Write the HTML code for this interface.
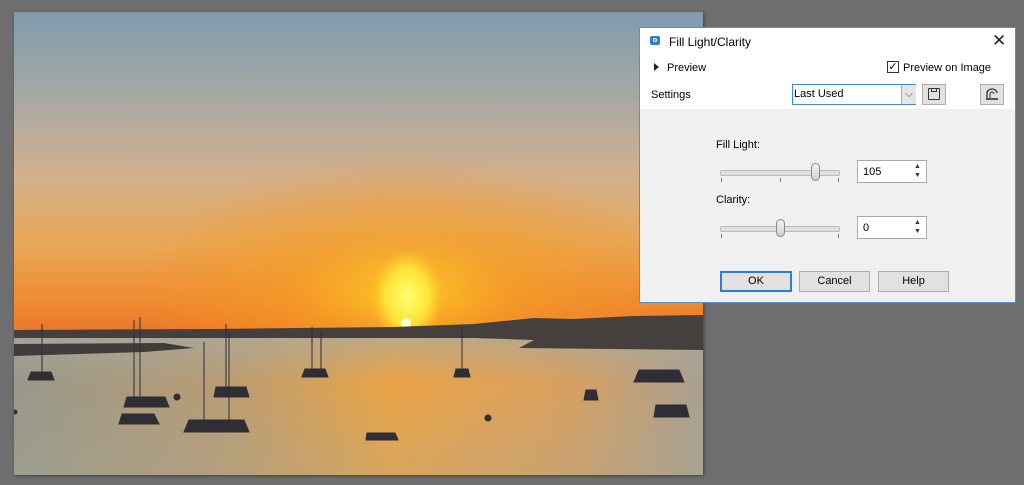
<!DOCTYPE html>
<html><head><style>
body{margin:0;width:1024px;height:485px;background:#6e6e6e;position:relative;overflow:hidden;font-family:"Liberation Sans",sans-serif;font-size:11px;color:#000}
.a{position:absolute}
#photo{left:14px;top:12px;width:689px;height:463px;overflow:hidden;box-shadow:1px 1px 3px rgba(0,0,0,.4)}
.btn{position:absolute;background:#e1e1e1;border:1px solid #adadad;text-align:center;line-height:18px;box-sizing:border-box}
.track{position:absolute;height:4px;background:#e0e0e0;border:1px solid #b8b8b8;border-radius:2px}
.thumb{position:absolute;width:9px;height:18px;background:linear-gradient(#f4f4f4,#cfcfcf);border:1px solid #8a8a8a;border-radius:5px;box-sizing:border-box}
.tick{position:absolute;width:1px;height:4px;background:#777}
.spin{position:absolute;background:#fff;border:1px solid #aaa;box-sizing:border-box}
</style></head><body>
<div id="photo" class="a">
<svg width="689" height="463" viewBox="0 0 689 463">
<defs>
<linearGradient id="sky" x1="0" y1="0" x2="0" y2="1">
<stop offset="0" stop-color="#7f9bae"/><stop offset=".25" stop-color="#a6a8a4"/><stop offset=".5" stop-color="#d2b08c"/><stop offset=".7" stop-color="#e8a858"/><stop offset=".88" stop-color="#f08a30"/><stop offset="1" stop-color="#e8702a"/></linearGradient>
<radialGradient id="sun" cx="392" cy="280" r="170" gradientUnits="userSpaceOnUse" gradientTransform="translate(392 280) scale(1.6 .8) translate(-392 -280)">
<stop offset="0" stop-color="#ffd020" stop-opacity=".9"/><stop offset=".4" stop-color="#f8a020" stop-opacity=".6"/><stop offset="1" stop-color="#f59020" stop-opacity="0"/></radialGradient>
<radialGradient id="core" cx=".5" cy=".5" r=".5"><stop offset="0" stop-color="#ffff70"/><stop offset=".6" stop-color="#ffee40" stop-opacity=".8"/><stop offset="1" stop-color="#ffcc30" stop-opacity="0"/></radialGradient>
<linearGradient id="water" x1="0" y1="0" x2="1" y2="0">
<stop offset="0" stop-color="#98988a"/><stop offset=".3" stop-color="#b89c74"/><stop offset=".55" stop-color="#eba445"/><stop offset=".8" stop-color="#d8a060"/><stop offset="1" stop-color="#a8a090"/></linearGradient>
<linearGradient id="wv" x1="0" y1="0" x2="0" y2="1"><stop offset="0" stop-color="#a8aaa0" stop-opacity=".7"/><stop offset=".35" stop-color="#a8aaa0" stop-opacity="0"/><stop offset="1" stop-color="#a8a898" stop-opacity=".3"/></linearGradient>
</defs>
<rect width="689" height="330" fill="url(#sky)"/>
<rect width="689" height="330" fill="url(#sun)"/>
<ellipse cx="393" cy="285" rx="36" ry="48" fill="url(#core)"/>
<circle cx="392" cy="311" r="5" fill="#ffffd0"/>
<rect y="322" width="689" height="141" fill="url(#water)"/>
<rect y="322" width="689" height="141" fill="url(#wv)"/>
<path d="M0 318 L200 317 L380 315 L460 312 L520 306 L560 307 L620 304 L689 303 L689 338 L505 336 L520 328 L460 326 L180 326 L0 326Z" fill="#45403e"/>
<path d="M0 332 L150 331 L180 336 L130 340 L0 344Z" fill="#403c3a"/>
<g fill="#2e2e34" stroke="#2e2e34">
<path d="M14 368h26l-3 -8h-20z"/><line x1="28" y1="312" x2="28" y2="360"/>
<path d="M110 395h45l-4-10h-38z"/><line x1="120" y1="308" x2="120" y2="385"/><line x1="126" y1="305" x2="126" y2="385"/>
<path d="M105 412h40l-5-10h-32z"/>
<path d="M170 420h65l-5-12h-55z"/><line x1="190" y1="330" x2="190" y2="408"/><line x1="215" y1="320" x2="215" y2="408"/>
<path d="M200 385h35l-3-10h-30z"/><line x1="212" y1="312" x2="212" y2="375"/>
<path d="M288 365h26l-3-8h-20z"/><line x1="298" y1="315" x2="298" y2="357"/><line x1="307" y1="320" x2="307" y2="357"/>
<path d="M440 365h16l-2-8h-12z"/><line x1="448" y1="315" x2="448" y2="357"/>
<path d="M352 428h32l-3-7h-28z"/>
<path d="M570 388h14l-2-10h-10z"/>
<path d="M620 370h50l-5-12h-40z"/><path d="M640 405h35l-3-12h-30z"/>
<circle cx="474" cy="406" r="3"/><circle cx="163" cy="385" r="3"/><circle cx="1" cy="400" r="2"/>
</g>
</svg></div>

<div class="a" style="left:639px;top:27px;width:377px;height:276px;background:#f0f0f0;border:1px solid #5a8fc8;box-sizing:border-box"></div>
<div class="a" style="left:640px;top:28px;width:375px;height:81px;background:#fff"></div>
<div class="a" style="left:650px;top:36px;width:10px;height:9px;background:#2a7fd0;border-radius:2px"></div>
<div class="a" style="left:653px;top:38px;width:4px;height:4px;border:1px solid #fff;border-radius:50%;box-sizing:border-box"></div>
<div class="a" style="left:669px;top:35px;font-size:12px">Fill Light/Clarity</div>
<div class="a" style="left:992px;top:31px;font-size:17px;color:#222">✕</div>
<div class="a" style="left:654px;top:63px;width:0;height:0;border-left:5px solid #222;border-top:4px solid transparent;border-bottom:4px solid transparent"></div>
<div class="a" style="left:667px;top:62px">Preview</div>
<div class="a" style="left:887px;top:61px;width:12px;height:12px;border:1px solid #333;box-sizing:border-box;background:#fff;font-size:11px;line-height:10px;text-align:center">✓</div>
<div class="a" style="left:903px;top:62px">Preview on Image</div>
<div class="a" style="left:651px;top:89px">Settings</div>
<div class="a" style="left:792px;top:84px;width:124px;height:21px;border:1px solid #3c8ad8;background:#fff;box-sizing:border-box"></div>
<div class="a" style="left:794px;top:88px">Last Used</div>
<div class="a" style="left:901px;top:85px;width:14px;height:19px;background:#e5e5e5;border-left:1px solid #aaa;font-size:10px;text-align:center;line-height:19px;color:#444">⌵</div>
<div class="btn" style="left:922px;top:84px;width:24px;height:21px"></div>
<div class="a" style="left:928px;top:88px;width:12px;height:12px;border:1px solid #333;border-radius:1px;box-sizing:border-box"></div>
<div class="a" style="left:931px;top:88px;width:6px;height:4px;border:1px solid #333;border-top:none;box-sizing:border-box"></div>
<div class="btn" style="left:980px;top:84px;width:24px;height:21px"></div>
<svg class="a" style="left:984px;top:86px" width="16" height="16" viewBox="0 0 16 16"><path d="M3 13V7a5 4 0 0 1 10 0" fill="none" stroke="#333" stroke-width="1.3"/><path d="M6 13V8a2 2 0 0 1 4 0" fill="none" stroke="#333"/><rect x="2" y="12" width="12" height="2" fill="#555"/></svg>

<div class="a" style="left:716px;top:139px">Fill Light:</div>
<div class="track" style="left:720px;top:170px;width:118px"></div>
<div class="thumb" style="left:811px;top:163px"></div>
<div class="tick" style="left:721px;top:178px"></div><div class="tick" style="left:780px;top:178px"></div><div class="tick" style="left:838px;top:178px"></div>
<div class="spin" style="left:857px;top:160px;width:70px;height:23px"></div>
<div class="a" style="left:863px;top:166px">105</div>
<div class="a" style="left:914px;top:162px;font-size:7px;line-height:9px;color:#333">▲<br>▼</div>

<div class="a" style="left:716px;top:194px">Clarity:</div>
<div class="track" style="left:720px;top:226px;width:118px"></div>
<div class="thumb" style="left:776px;top:219px"></div>
<div class="tick" style="left:721px;top:234px"></div><div class="tick" style="left:838px;top:234px"></div>
<div class="spin" style="left:857px;top:216px;width:70px;height:23px"></div>
<div class="a" style="left:863px;top:222px">0</div>
<div class="a" style="left:914px;top:218px;font-size:7px;line-height:9px;color:#333">▲<br>▼</div>

<div class="btn" style="left:720px;top:271px;width:72px;height:21px;border:2px solid #2a7fd0;line-height:17px">OK</div>
<div class="btn" style="left:799px;top:271px;width:71px;height:21px">Cancel</div>
<div class="btn" style="left:878px;top:271px;width:71px;height:21px">Help</div>
</body></html>
